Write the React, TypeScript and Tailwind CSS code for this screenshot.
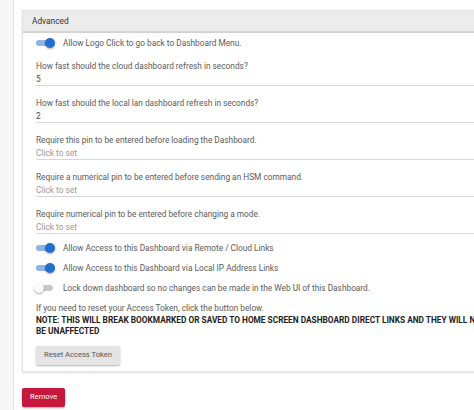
import React from 'react'

// Advanced dashboard settings panel
function Toggle({ on }: { on: boolean }) {
  return (
    <div className="relative w-[17px] h-[10px] shrink-0">
      <div className={`absolute left-0 right-0 top-[2px] h-[6px] rounded-full ${on ? 'bg-[#8fb5e6]' : 'bg-[#c8c8c8]'}`} />
      <div
        className={`absolute top-0 w-[10px] h-[10px] rounded-full shadow-[0_1px_2px_rgba(0,0,0,0.35)] ${on ? 'right-[-2px] bg-[#1e6fd0]' : 'left-[-2px] bg-[#fafafa]'}`}
      />
    </div>
  )
}

function ToggleRow({ on, label }: { on: boolean; label: string }) {
  return (
    <div className="flex items-center gap-[10px] h-[20px]">
      <Toggle on={on} />
      <span className="text-[#5a5a5a]">{label}</span>
    </div>
  )
}

function Field({ label, value, placeholder }: { label: string; value?: string; placeholder?: string }) {
  return (
    <div className="flex flex-col mr-[-200px]">
      <span className="text-[#5a5a5a] leading-[14px]">{label}</span>
      <span className={`leading-[12px] ${value ? 'text-[#444]' : 'text-[#999]'}`}>{value ?? placeholder}</span>
      <div className="h-px bg-[#d6d6d6] mb-[10px]" />
    </div>
  )
}

export default function App() {
  return (
    <div className="w-[474px] h-[410px] overflow-hidden flex bg-white text-[8.3px]" style={{ fontFamily: 'Roboto, "Liberation Sans", sans-serif' }}>
      <div className="w-[14px] shrink-0 bg-[#f7f7f7] border-r border-[#e6e6e6]" />
      <div className="flex-1 min-w-0 pl-[8px] pt-[10px]">
        <div className="w-[620px] border border-[#e2e2e2] shadow-[0_1px_2px_rgba(0,0,0,0.12)]">
          <div className="h-[22px] bg-[#ececec] border-b-2 border-[#d2d2d2] flex items-center px-[9px] text-[#333]">
            Advanced
          </div>
          <div className="pl-[13px] pb-[6px]">
            <ToggleRow on label="Allow Logo Click to go back to Dashboard Menu." />
            <div className="mt-[6px]" />
            <Field label="How fast should the cloud dashboard refresh in seconds?" value="5" />
            <Field label="How fast should the local lan dashboard refresh in seconds?" value="2" />
            <Field label="Require this pin to be entered before loading the Dashboard." placeholder="Click to set" />
            <Field label="Require a numerical pin to be entered before sending an HSM command." placeholder="Click to set" />
            <Field label="Require numerical pin to be entered before changing a mode." placeholder="Click to set" />
            <div className="mt-[-6px]">
              <ToggleRow on label="Allow Access to this Dashboard via Remote / Cloud Links" />
              <ToggleRow on label="Allow Access to this Dashboard via Local IP Address Links" />
              <ToggleRow on={false} label="Lock down dashboard so no changes can be made in the Web UI of this Dashboard." />
            </div>
            <div className="mt-[5px] leading-[11.5px] text-[#5a5a5a]">
              If you need to reset your Access Token, click the button below.
              <br />
              <span className="font-bold text-[#222]">
                NOTE: THIS WILL BREAK BOOKMARKED OR SAVED TO HOME SCREEN DASHBOARD DIRECT LINKS AND THEY WILL NEED TO
                <br />
                BE UNAFFECTED
              </span>
            </div>
            <button className="mt-[8px] h-[19px] px-[8px] text-[7.6px] bg-[#e4e4e4] text-[#555] rounded-[2px] shadow-[0_1px_2px_rgba(0,0,0,0.3)]">
              Reset Access Token
            </button>
          </div>
        </div>
        <button className="mt-[16px] h-[19px] px-[8px] text-[7.6px] bg-[#c8163c] text-white rounded-[2px] shadow-[0_1px_2px_rgba(0,0,0,0.3)]">
          Remove
        </button>
      </div>
    </div>
  )
}
